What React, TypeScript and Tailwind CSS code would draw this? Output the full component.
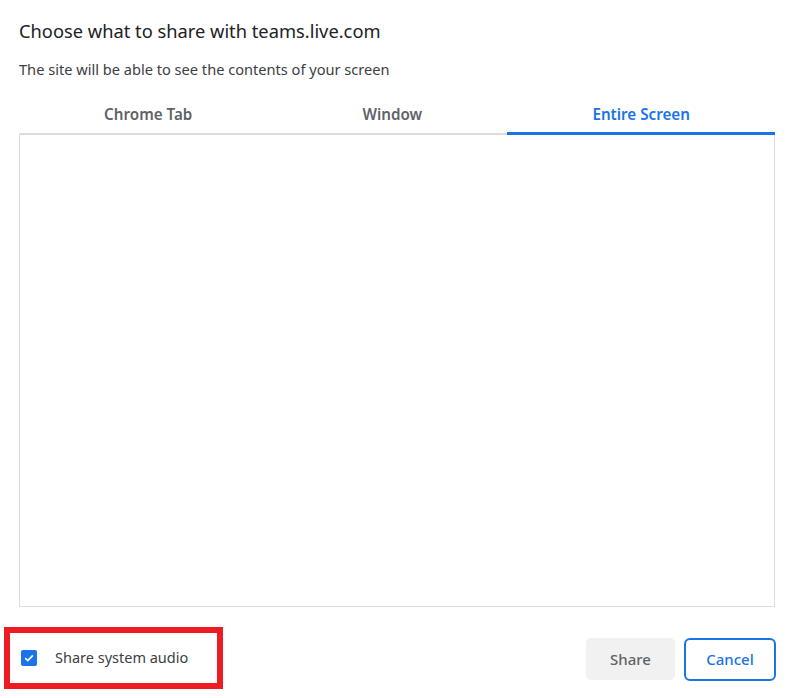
import * as React from 'react'

const tabs = ['Chrome Tab', 'Window', 'Entire Screen']

export default function App() {
  const [active, setActive] = React.useState(2)
  const [audio, setAudio] = React.useState(true)

  return (
    <div className="w-[788px] h-[698px] bg-white flex flex-col font-['Noto_Sans',sans-serif] text-[#202124]">
      {/* Header */}
      <div className="px-[19px] pt-[17px]">
        <h1 className="text-[18.3px] leading-[28px] font-normal">Choose what to share with teams.live.com</h1>
        <p className="mt-[14px] text-[14.6px] leading-[20px] text-[#3c4043]">
          The site will be able to see the contents of your screen
        </p>
      </div>

      {/* Tabs */}
      <div className="ml-[19px] mr-[13px] mt-[18px] flex border-b-2 border-[#dadce0]">
        {tabs.map((t, i) => (
          <button
            key={t}
            onClick={() => setActive(i)}
            className={
              'flex-auto h-[38px] -mb-[2px] text-[15.2px] font-semibold ' +
              (i === active
                ? 'text-[#1a73e8] border-b-[3px] border-[#1a73e8]'
                : 'text-[#5f6368] border-b-[3px] border-transparent')
            }
          >
            {t}
          </button>
        ))}
      </div>

      {/* Preview area */}
      <div className="ml-[19px] mr-[13px] h-[472px] border border-t-0 border-[#dadce0]" />

      {/* Footer */}
      <div className="mt-[20px] flex items-start justify-between pl-[4px] pr-[12px]">
        <label className="h-[62px] w-[219px] border-[6px] border-[#ed1c24] flex items-center pl-[11px] gap-[18px] cursor-pointer">
          <span
            onClick={() => setAudio(!audio)}
            className={
              'w-[16px] h-[16px] rounded-[2px] flex items-center justify-center ' +
              (audio ? 'bg-[#1a73e8]' : 'border-2 border-[#5f6368]')
            }
          >
            {audio && (
              <svg width="12" height="12" viewBox="0 0 12 12" fill="none">
                <path d="M2.2 6.2 4.8 8.6 9.8 3.4" stroke="white" strokeWidth="1.6" />
              </svg>
            )}
          </span>
          <span className="text-[14.5px] text-[#3c4043]">Share system audio</span>
        </label>
        <div className="flex gap-[9px] mt-[11px]">
          <button className="w-[89px] h-[42px] rounded-[5px] bg-[#f1f1f1] text-[15px] font-medium text-[#5f6368]">
            Share
          </button>
          <button className="w-[92px] h-[43px] rounded-[6px] border-2 border-[#1a73e8] text-[15px] font-medium text-[#1a73e8]">
            Cancel
          </button>
        </div>
      </div>
    </div>
  )
}
